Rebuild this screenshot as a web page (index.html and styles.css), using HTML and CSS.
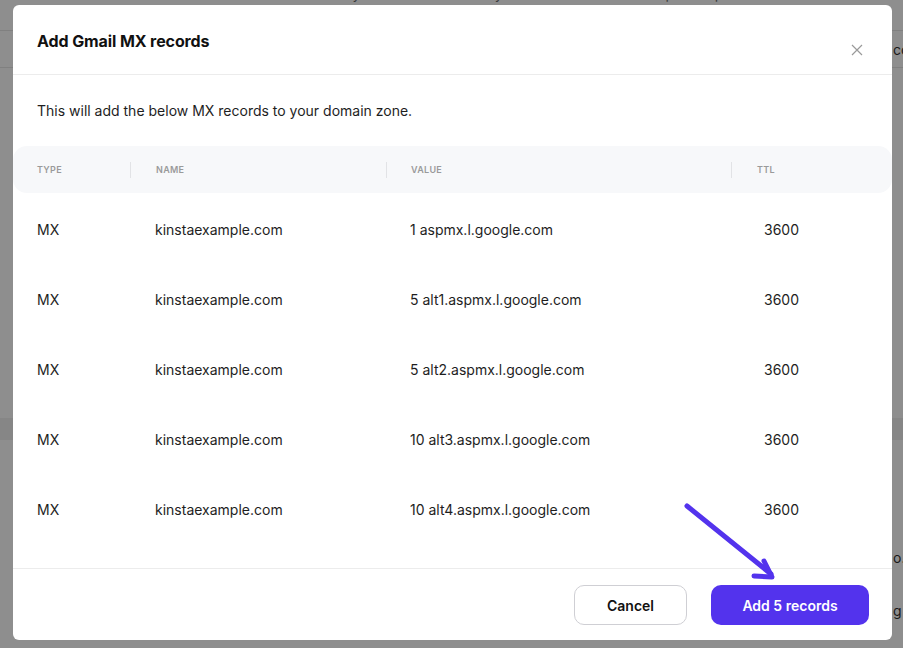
FILE: index.html
```html
<!DOCTYPE html>
<html>
<head>
<meta charset="utf-8">
<link rel="stylesheet" href="styles.css">
</head>
<body>
<div class="backdrop">
  <div class="bg-top">Find your domain name in your list of domains and open it up</div>
  <div class="bg-row bg-row-a"><span class="bg-right">co</span></div>
  <div class="bg-band"></div>
  <div class="bg-row bg-row-b"><span class="bg-right">o.u</span></div>
  <div class="bg-row bg-row-c"><span class="bg-right">g</span></div>
</div>

<div class="modal">
  <header class="modal-head">
    <h2 class="modal-title">Add Gmail MX records</h2>
    <button class="close" aria-label="Close">
      <svg width="12" height="12" viewBox="0 0 12 12"><path d="M1 1L11 11M11 1L1 11" stroke="#9a9a9a" stroke-width="1.2" fill="none"/></svg>
    </button>
  </header>
  <div class="modal-body">
    <p class="intro">This will add the below MX records to your domain zone.</p>
    <div class="table">
      <div class="thead">
        <div class="th c1">Type</div>
        <div class="th c2">Name</div>
        <div class="th c3">Value</div>
        <div class="th c4">TTL</div>
      </div>
      <div class="tr"><div class="td c1">MX</div><div class="td c2">kinstaexample.com</div><div class="td c3">1 aspmx.l.google.com</div><div class="td c4 ttl">3600</div></div>
      <div class="tr"><div class="td c1">MX</div><div class="td c2">kinstaexample.com</div><div class="td c3">5 alt1.aspmx.l.google.com</div><div class="td c4 ttl">3600</div></div>
      <div class="tr"><div class="td c1">MX</div><div class="td c2">kinstaexample.com</div><div class="td c3">5 alt2.aspmx.l.google.com</div><div class="td c4 ttl">3600</div></div>
      <div class="tr"><div class="td c1">MX</div><div class="td c2">kinstaexample.com</div><div class="td c3">10 alt3.aspmx.l.google.com</div><div class="td c4 ttl">3600</div></div>
      <div class="tr"><div class="td c1">MX</div><div class="td c2">kinstaexample.com</div><div class="td c3">10 alt4.aspmx.l.google.com</div><div class="td c4 ttl">3600</div></div>
    </div>
  </div>
  <footer class="modal-foot">
    <button class="btn btn-cancel">Cancel</button>
    <button class="btn btn-primary">Add 5 records</button>
  </footer>
  <svg class="arrow" width="120" height="110" viewBox="0 0 120 110">
    <path d="M6 10 L90 78" stroke="#5333ed" stroke-width="5" stroke-linecap="round" fill="none"/>
    <path d="M73 80 L91 81 L83 65" stroke="#5333ed" stroke-width="5" stroke-linecap="round" stroke-linejoin="round" fill="none"/>
  </svg>
</div>
</body>
</html>
```

FILE: styles.css
```css
* { box-sizing: border-box; }
html, body { margin: 0; padding: 0; }
body {
  width: 903px;
  height: 648px;
  overflow: hidden;
  background: #8e8e8e;
  font-family: Inter, "Noto Sans", "Liberation Sans", sans-serif;
  color: #222;
  position: relative;
}

/* dimmed page under the overlay */
.backdrop {
  display: flex;
  flex-direction: column;
  font-size: 14px;
  color: #1c1c1c;
}
.bg-top {
  height: 44px;
  margin-top: -14px;
  padding-left: 320px;
  line-height: 16px;
  color: #3a3a3a;
}
.bg-row {
  display: flex;
  justify-content: flex-end;
  align-items: center;
}
.bg-row-a {
  height: 38px;
  border-top: 1px solid #808080;
  border-bottom: 1px solid #808080;
}
.bg-band {
  margin-top: 350px;
  height: 22px;
  background: #868686;
}
.bg-row-b { height: 30px; margin-top: 102px; }
.bg-row-c { height: 30px; margin-top: 23px; }
.bg-right {
  width: 10px;
  overflow: hidden;
  white-space: nowrap;
  color: #1a1a1a;
}

/* modal */
.modal {
  position: absolute;
  left: 13px;
  top: 5px;
  width: 879px;
  height: 635px;
  background: #fff;
  border-radius: 6px;
  display: flex;
  flex-direction: column;
}
.modal-head {
  height: 70px;
  border-bottom: 1px solid #ececec;
  display: flex;
  justify-content: space-between;
  align-items: flex-start;
  padding: 0 24px;
}
.modal-title {
  margin: 26px 0 0;
  font-size: 16px;
  line-height: 20px;
  font-weight: 700;
  letter-spacing: -0.1px;
  color: #111;
}
.close {
  margin-top: 39px;
  margin-right: 5px;
  width: 12px;
  height: 12px;
  padding: 0;
  border: 0;
  background: none;
  display: flex;
}

.modal-body {
  flex: 1;
  padding-top: 26px;
}
.intro {
  margin: 0 0 25px 24px;
  font-size: 14px;
  line-height: 20px;
  color: #1e1e1e;
}
.table { display: flex; flex-direction: column; }
.thead, .tr {
  display: grid;
  grid-template-columns: 117px 256px 345px 1fr;
  align-items: center;
}
.thead {
  height: 47px;
  background: #f7f8fa;
  border-radius: 14px;
}
.th {
  font-size: 9px;
  font-weight: 600;
  letter-spacing: 0.3px;
  text-transform: uppercase;
  color: #9a9a9a;
  line-height: 16px;
  padding-left: 25px;
  border-left: 1px solid #e2e3e6;
}
.th.c1 { border-left: 0; padding-left: 24px; }
.th.c3 { padding-left: 24px; }
.tr { height: 70px; }
.td {
  font-size: 14px;
  line-height: 20px;
  padding-left: 25px;
  padding-top: 3px;
  color: #1e1e1e;
}
.td.c1 { padding-left: 24px; }
.td.c3 { padding-left: 24px; }
.td.ttl { padding-left: 33px; }

.modal-foot {
  height: 72px;
  border-top: 1px solid #ececec;
  display: flex;
  justify-content: flex-end;
  align-items: flex-start;
  gap: 24px;
  padding: 16px 23px 0 0;
}
.btn {
  height: 40px;
  border-radius: 10px;
  font-family: Inter, "Noto Sans", "Liberation Sans", sans-serif;
  font-size: 14px;
  font-weight: 600;
  cursor: pointer;
}
.btn-cancel {
  width: 113px;
  background: #fff;
  border: 1px solid #cfcfd4;
  color: #111;
}
.btn-primary {
  width: 158px;
  background: #5333ed;
  border: 0;
  color: #fff;
}

.arrow {
  position: absolute;
  left: 668px;
  top: 491px;
}
```
